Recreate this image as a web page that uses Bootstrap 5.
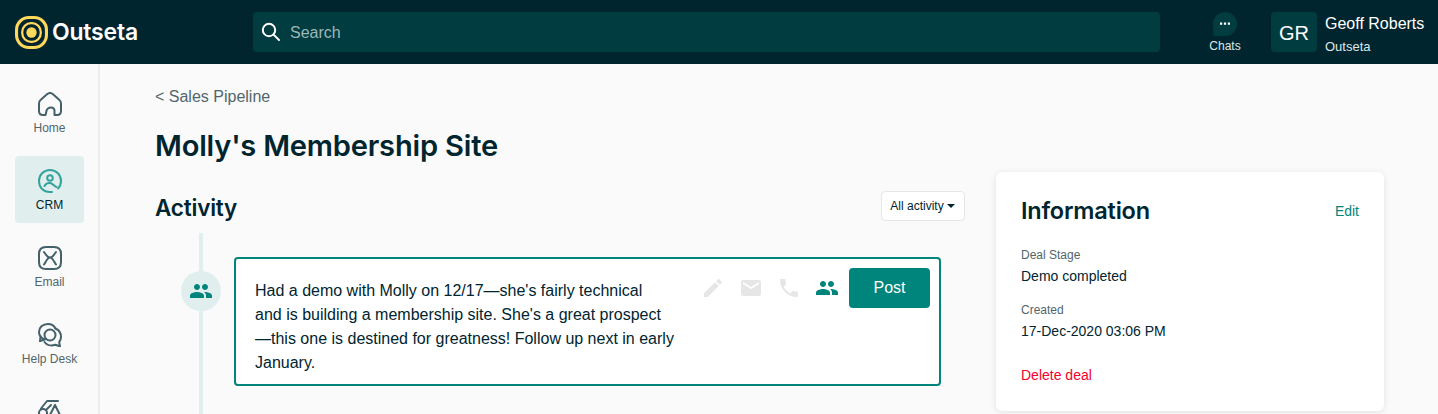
<!DOCTYPE html>
<html lang="en">
<head>
    <meta charset="UTF-8">
    <meta name="viewport" content="width=device-width, initial-scale=1.0">
    <title>Outseta CRM</title>
    <link href="https://cdn.jsdelivr.net/npm/bootstrap@5.3.0/dist/css/bootstrap.min.css" rel="stylesheet">
    <style>
        html, body { height: 100%; overflow: hidden; }
        body {
            background-color: #fafafa;
            color: #00252f;
            font-family: "Liberation Sans", Arial, sans-serif;
        }
        .top-bar { height: 64px; background: #00252f; color: #fff; padding-left: 15px; }
        .brand-name { font-family: Inter, sans-serif; font-weight: 600; font-size: 23px; letter-spacing: -.2px; margin-left: 4px; width: 201px; flex-shrink: 0; padding-top: 1px; }
        .search-box { width: 907px; height: 40px; background: #003c40; border-radius: 4px; padding-left: 8px; color: #9db7b8; }
        .search-box svg { margin-right: 9px; }
        .search-box span { padding-top: 2px; }
        .chat-item { margin-left: 53px; width: 24px; font-size: 12px; line-height: 14px; color: #dfe8e8; padding-top: 1px; }
        .chat-item span { margin-top: 3px; }
        .avatar-box { width: 46px; height: 40px; margin-left: 34px; background: #003c40; border-radius: 4px; font-size: 20px; padding-top: 1px; }
        .user-name { margin-left: 8px; font-size: 16px; line-height: 20px; padding-top: 4px; }
        .user-org { font-size: 13px; line-height: 16px; margin-top: 5px; color: #dfe8e8; }
        .page-body { height: 350px; }
        .side-bar { width: 100px; flex-shrink: 0; border-right: 2px solid #eeeeee; padding: 15px 15px 0; overflow: hidden; gap: 10px; }
        .side-item { width: 69px; height: 67px; flex-shrink: 0; border-radius: 4px; font-size: 12px; line-height: 14px; color: #50666c; padding-top: 13px; }
        .side-item svg { margin-bottom: 5px; stroke: #44606a; }
        .side-item.is-active { background: #e0efed; color: #00252f; }
        .side-item.is-active svg { stroke: #35a39b; }
        .main-area { padding: 21px 0 0 55px; gap: 31px; overflow: hidden; }
        .left-col { width: 810px; flex-shrink: 0; }
        .back-link { font-size: 16px; line-height: 24px; color: #50666c; text-decoration: none; }
        .page-title { font-family: Inter, sans-serif; font-weight: 600; font-size: 29.100px; line-height: 36px; margin: 19px 0 0; letter-spacing: -.2px; }
        .section-title { font-family: Inter, sans-serif; font-weight: 600; font-size: 22.500px; line-height: 30px; margin: 4px 0 0; letter-spacing: -.2px; }
        .activity-head { margin-top: 27px; height: 30px; }
        .filter-btn { width: 84px; height: 30px; padding: 0 1px 0 0; font-size: 12px; color: #00252f; background: #fff; border: 1px solid #e6e6e6; border-radius: 4px; white-space: nowrap; }
        .filter-btn:hover { background: #fff; color: #00252f; border-color: #e6e6e6; }
        .filter-btn.dropdown-toggle::after { border-top-width: 4px; border-left-width: 4px; border-right-width: 4px; margin-left: 3px; vertical-align: 2px; }
        .timeline-row { margin-top: 12px; padding-left: 26px; }
        .timeline-rail {
            width: 40px; height: 200px; flex-shrink: 0; padding-top: 38px;
            background: linear-gradient(#e0efed, #e0efed) no-repeat 18px 0 / 4px 100%;
        }
        .rail-dot { width: 40px; height: 40px; border-radius: 50%; background: #e0efed; }
        .note-box { width: 707px; height: 129px; margin: 24px 0 0 13px; background: #fff; border: 2px solid #00857c; border-radius: 4px; padding: 20px 9px 0 19px; }
        .note-text { width: 425px; font-size: 16px; line-height: 24px; margin: 0; }
        .note-tools { margin: -11px 0 0 auto; height: 40px; gap: 14px; }
        .note-tools svg { fill: #e6e6e6; }
        .note-tools svg.is-on { fill: #00857c; }
        .post-btn { width: 81px; height: 40px; margin-left: -4px; padding: 0; font-size: 16px; color: #fff; background: #00857c; border: 0; border-radius: 4px; }
        .post-btn:hover { background: #00857c; color: #fff; }
        .info-card { width: 388px; height: 239px; flex-shrink: 0; margin-top: 87px; padding: 21px 25px; background: #fff; border: 0; border-radius: 6px; box-shadow: 0 1px 6px rgba(0, 0, 0, .1); }
        .info-title { font-family: Inter, sans-serif; font-weight: 600; font-size: 23.500px; line-height: 36px; margin: 0; letter-spacing: -.2px; }
        .edit-link { color: #00857c; font-size: 14px; text-decoration: none; }
        .field-label { font-size: 12px; line-height: 16px; color: #50666c; }
        .field-label.is-first { margin-top: 18px; }
        .field-value { font-size: 14px; line-height: 20px; margin-top: 3px; }
        .delete-link { color: #f5002d; font-size: 14px; text-decoration: none; line-height: 20px; }
    </style>
</head>
<body>
    <header class="top-bar d-flex align-items-center">
        <svg class="flex-shrink-0" width="33" height="33" viewBox="0 0 32 32" fill="none" stroke="#ffd85c">
            <rect x="1.500" y="1.500" width="29" height="29" rx="12" stroke-width="3"/>
            <rect x="7" y="7" width="18" height="18" rx="8.500" stroke-width="2.200"/>
            <circle cx="16" cy="16" r="5" fill="#ffd85c" stroke="none"/>
        </svg>
        <div class="brand-name">Outseta</div>
        <div class="search-box d-flex align-items-center">
            <svg width="20" height="20" viewBox="0 0 20 20" fill="none" stroke="#fff" stroke-width="2" stroke-linecap="round"><circle cx="8" cy="8" r="6.200"/><path d="M12.600 12.600 18 18"/></svg>
            <span>Search</span>
        </div>
        <div class="chat-item d-flex flex-column align-items-center">
            <svg width="24" height="24" viewBox="0 0 24 24" class="flex-shrink-0"><path fill="#003c40" d="M12 0a12 12 0 0 1 0 24H1c-.800 0-1-.600-.600-1.200C.800 22 0 20 0 12A12 12 0 0 1 12 0z"/><path fill="#fff" d="M7 10.500h2.200v2.200H7zM10.900 10.500h2.200v2.200h-2.200zM14.800 10.500H17v2.200h-2.200z"/></svg>
            <span>Chats</span>
        </div>
        <div class="avatar-box d-flex align-items-center justify-content-center flex-shrink-0">GR</div>
        <div class="user-name text-nowrap">
            <div>Geoff Roberts</div>
            <div class="user-org">Outseta</div>
        </div>
    </header>
    <div class="page-body d-flex">
        <nav class="side-bar d-flex flex-column">
            <div class="side-item d-flex flex-column align-items-center">
                <svg width="24" height="24" viewBox="0 0 24 24" fill="none" stroke-width="2" stroke-linecap="round" stroke-linejoin="round"><path d="M7.500 23H5c-2.500 0-4-1.500-4-4v-7.500c0-1.500.600-2.800 1.800-3.800L9 2.200c2-1.600 4-1.600 6 0l6.200 5.500c1.200 1 1.800 2.300 1.800 3.800V19c0 2.500-1.500 4-4 4h-2.500v-4c0-2-1.500-3.500-3.500-3.500S8.500 17 8.500 19z"/></svg>
                <span>Home</span>
            </div>
            <div class="side-item is-active d-flex flex-column align-items-center">
                <svg width="24" height="24" viewBox="0 0 24 24" fill="none" stroke-width="2" stroke-linecap="round" stroke-linejoin="round"><path d="M14 23h-2C5 23 1 18 1 12S5.500 1 12 1s11 5 11 11c0 3-1 5.500-3 7.500"/><circle cx="12" cy="9" r="2.800"/><path d="M6.500 17c1-2 3-3.200 5.500-3 2.500.300 3.500 2.800 6.500 4"/></svg>
                <span>CRM</span>
            </div>
            <div class="side-item d-flex flex-column align-items-center">
                <svg width="24" height="24" viewBox="0 0 24 24" fill="none" stroke-width="2" stroke-linecap="round" stroke-linejoin="round"><path d="M8 1h8c4.500 0 7 2.500 7 7v8c0 4.500-2.500 7-7 7H8c-4.500 0-7-2.500-7-7V8c0-4.500 2.500-7 7-7z"/><path d="M6 6c2 3 3.500 5.500 6 5.500S16 9 18 6M6 18.500c2-3 3.500-7 6-7s4 4 6 7"/></svg>
                <span>Email</span>
            </div>
            <div class="side-item d-flex flex-column align-items-center">
                <svg width="24" height="24" viewBox="0 0 24 24" fill="none" stroke-width="2" stroke-linecap="round" stroke-linejoin="round"><path d="M7 16.500C3 15 1 12.500 1 9 1 4.500 4.500 1 10 1c3.500 0 6 1.500 7.500 4.500"/><path d="M2 18l.6-4.500"/><path d="M2 18l4-1.200"/><circle cx="12" cy="12" r="5.500"/><path d="M17.500 5.500C21 7 23 10 23 14c0 2-.700 3.700-1.800 5.200l.800 4.300-4.500-1.700c-4.500 1.500-9 .2-11-2.800"/></svg>
                <span>Help Desk</span>
            </div>
            <div class="side-item d-flex flex-column align-items-center">
                <svg width="24" height="24" viewBox="0 0 24 24" fill="none" stroke-width="2" stroke-linecap="round" stroke-linejoin="round"><path d="M20 1H9L3 8.500"/><circle cx="5" cy="13" r="4"/><path d="M17 5l-5 10M17 5l5 10h-10"/><path d="M13 5l-5 5"/></svg>
            </div>
        </nav>
        <main class="main-area d-flex flex-grow-1">
            <div class="left-col">
                <a href="#" class="back-link">&lt; Sales Pipeline</a>
                <h1 class="page-title">Molly's Membership Site</h1>
                <div class="activity-head d-flex align-items-center justify-content-between">
                    <h2 class="section-title">Activity</h2>
                    <button type="button" class="btn filter-btn dropdown-toggle">All activity</button>
                </div>
                <div class="timeline-row d-flex">
                    <div class="timeline-rail">
                        <div class="rail-dot d-flex align-items-center justify-content-center">
                            <svg width="24" height="24" viewBox="0 0 24 24" fill="#00857c"><path d="M16 11c1.660 0 2.990-1.340 2.990-3S17.660 5 16 5c-1.660 0-3 1.340-3 3s1.340 3 3 3zm-8 0c1.660 0 2.990-1.340 2.990-3S9.660 5 8 5C6.340 5 5 6.340 5 8s1.340 3 3 3zm0 2c-2.330 0-7 1.170-7 3.500V19h14v-2.500c0-2.330-4.670-3.500-7-3.500zm8 0c-.290 0-.620.020-.970.050 1.160.840 1.970 1.970 1.970 3.450V19h6v-2.500c0-2.330-4.670-3.500-7-3.500z"/></svg>
                        </div>
                    </div>
                    <div class="note-box d-flex">
                        <p class="note-text">Had a demo with Molly on 12/17—she's fairly technical<br>and is building a membership site. She's a great prospect<br>—this one is destined for greatness! Follow up next in early<br>January.</p>
                        <div class="note-tools d-flex align-items-center">
                            <svg width="24" height="24" viewBox="0 0 24 24"><path d="M3 17.250V21h3.750L17.810 9.940l-3.750-3.750L3 17.250zM20.710 7.040c.390-.390.390-1.020 0-1.410l-2.340-2.340c-.390-.390-1.020-.390-1.410 0l-1.830 1.830 3.750 3.750 1.830-1.830z"/></svg>
                            <svg width="24" height="24" viewBox="0 0 24 24"><path d="M20 4H4c-1.100 0-1.990.900-1.990 2L2 18c0 1.100.900 2 2 2h16c1.100 0 2-.900 2-2V6c0-1.100-.900-2-2-2zm0 4l-8 5-8-5V6l8 5 8-5v2z"/></svg>
                            <svg width="24" height="24" viewBox="0 0 24 24"><path d="M6.620 10.790c1.440 2.830 3.760 5.140 6.590 6.590l2.200-2.200c.270-.270.670-.360 1.020-.240 1.120.370 2.330.570 3.570.570.550 0 1 .450 1 1V20c0 .550-.450 1-1 1-9.390 0-17-7.610-17-17 0-.550.450-1 1-1h3.500c.550 0 1 .450 1 1 0 1.250.200 2.450.570 3.570.110.350.030.740-.250 1.020l-2.200 2.200z"/></svg>
                            <svg class="is-on" width="24" height="24" viewBox="0 0 24 24"><path d="M16 11c1.660 0 2.990-1.340 2.990-3S17.660 5 16 5c-1.660 0-3 1.340-3 3s1.340 3 3 3zm-8 0c1.660 0 2.990-1.340 2.990-3S9.660 5 8 5C6.340 5 5 6.340 5 8s1.340 3 3 3zm0 2c-2.330 0-7 1.170-7 3.500V19h14v-2.500c0-2.330-4.670-3.500-7-3.500zm8 0c-.290 0-.620.020-.970.050 1.160.840 1.970 1.970 1.970 3.450V19h6v-2.500c0-2.330-4.670-3.500-7-3.500z"/></svg>
                            <button type="button" class="btn post-btn">Post</button>
                        </div>
                    </div>
                </div>
            </div>
            <aside class="card info-card">
                <div class="d-flex align-items-center justify-content-between">
                    <h2 class="info-title">Information</h2>
                    <a href="#" class="edit-link">Edit</a>
                </div>
                <div class="field-label is-first">Deal Stage</div>
                <div class="field-value">Demo completed</div>
                <div class="field-label mt-3">Created</div>
                <div class="field-value">17-Dec-2020 03:06 PM</div>
                <a href="#" class="delete-link mt-4">Delete deal</a>
            </aside>
        </main>
    </div>
    <script src="https://cdn.jsdelivr.net/npm/bootstrap@5.3.0/dist/js/bootstrap.bundle.min.js"></script>
</body>
</html>
